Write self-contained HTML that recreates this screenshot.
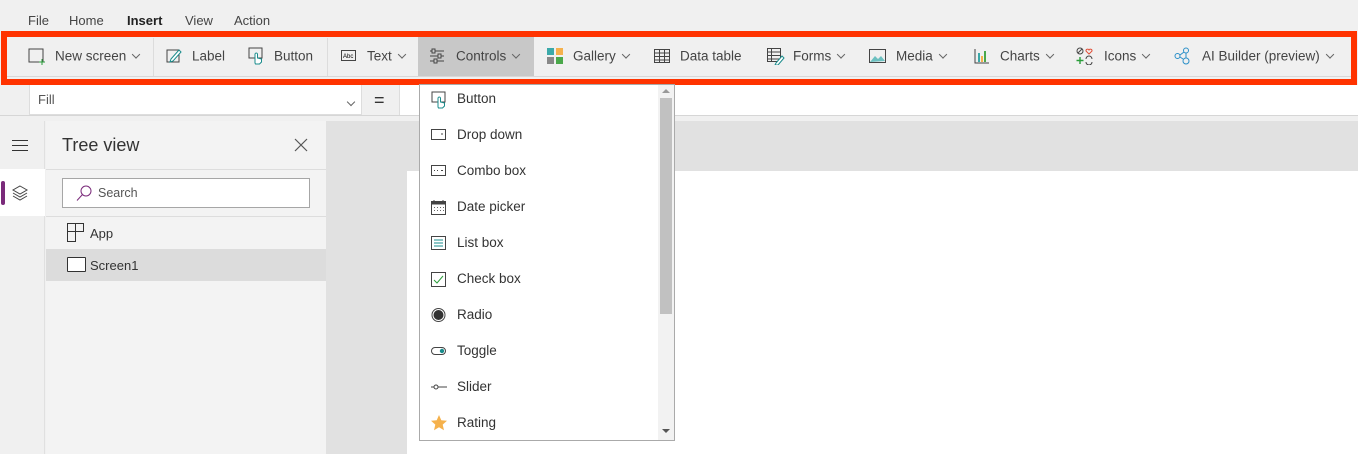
<!DOCTYPE html>
<html><head><style>
*{box-sizing:border-box;margin:0;padding:0}
body{width:1358px;height:454px;overflow:hidden;background:#f0f0f0;font-family:"Liberation Sans",sans-serif;color:#333;position:relative;font-size:13px}
.a{position:absolute}
.menu span{position:absolute;top:13px;font-size:13px;color:#444}
.tb{position:absolute;top:56px;transform:translateY(-50%);font-size:13.5px;color:#444;white-space:nowrap}
.chev{display:inline-block;width:6px;height:6px;border-right:1px solid #666;border-bottom:1px solid #666;transform:rotate(45deg);margin-left:7px;position:relative;top:-3px}
.it{position:absolute;left:11px;font-size:13.5px;color:#333;height:36px;line-height:36px;width:230px}
.it svg{position:absolute;left:0;top:10px}
.it span{position:absolute;left:26px}
</style></head><body>
<div class="menu"><span style="left:28px">File</span><span style="left:69px">Home</span><span style="left:127px;font-weight:bold;color:#222">Insert</span><span style="left:185px">View</span><span style="left:234px">Action</span></div>

<!-- red box -->
<div class="a" style="left:1px;top:31px;width:1356px;height:54px;border:6px solid #ff3300;background:#f0f0f0"></div>
<div class="a" style="left:7px;top:76px;width:1344px;height:1px;background:#d8d8d8"></div>
<div class="a" style="left:153px;top:38px;width:1px;height:38px;background:#dcdcdc"></div>
<div class="a" style="left:327px;top:38px;width:1px;height:38px;background:#dcdcdc"></div>
<div class="a" style="left:418px;top:37px;width:116px;height:39px;background:#c8c8c8"></div>

<svg class="a" style="left:28px;top:48px" width="18" height="18"><rect x="1" y="1" width="14" height="13" fill="none" stroke="#444"/><path d="M14 11v6M11 14h6" stroke="#2a9d3a"/></svg>
<div class="tb" style="left:55px">New screen<i class="chev"></i></div>
<svg class="a" style="left:166px;top:48px" width="16" height="16"><rect x="1" y="2" width="12" height="12" fill="none" stroke="#444"/><path d="M5 11l8-9 2 2-8 9-3 1z" fill="#fff" stroke="#1a8c8c"/></svg>
<div class="tb" style="left:192px">Label</div>
<svg class="a" style="left:248px;top:47px" width="18" height="18"><rect x="1" y="1" width="13" height="10" fill="none" stroke="#444"/><path d="M7 16v-9a1.3 1.3 0 0 1 2.5 0v4l4 1v3l-2 2h-4z" fill="#fff" stroke="#1a8c8c"/></svg>
<div class="tb" style="left:274px">Button</div>
<svg class="a" style="left:341px;top:50px" width="16" height="12"><rect x=".5" y=".5" width="14" height="10" fill="none" stroke="#444"/><text x="2" y="8" font-size="6" font-family="Liberation Sans">Abc</text></svg>
<div class="tb" style="left:367px">Text<i class="chev"></i></div>
<svg class="a" style="left:429px;top:48px" width="16" height="16"><path d="M1 3h14M1 8h14M1 13h14" stroke="#444"/><rect x="3" y="1" width="3" height="4" fill="#c8c8c8" stroke="#444"/><rect x="9" y="6" width="3" height="4" fill="#c8c8c8" stroke="#444"/><rect x="5" y="11" width="3" height="4" fill="#c8c8c8" stroke="#444"/></svg>
<div class="tb" style="left:456px">Controls<i class="chev"></i></div>
<svg class="a" style="left:547px;top:48px" width="17" height="17"><rect x="0" y="0" width="7" height="7" fill="#3aa9a9"/><rect x="9" y="0" width="7" height="7" fill="#f5b14c"/><rect x="0" y="9" width="7" height="7" fill="#888"/><rect x="9" y="9" width="7" height="7" fill="#4aa84a"/></svg>
<div class="tb" style="left:573px">Gallery<i class="chev"></i></div>
<svg class="a" style="left:654px;top:49px" width="17" height="15"><rect x=".5" y=".5" width="15" height="13" fill="none" stroke="#444"/><path d="M.5 4h15M.5 7.5h15M.5 11h15M5.5 .5v13M10.5 .5v13" stroke="#444"/></svg>
<div class="tb" style="left:680px">Data table</div>
<svg class="a" style="left:767px;top:48px" width="18" height="17"><rect x=".5" y=".5" width="13" height="13" fill="none" stroke="#444"/><path d="M.5 4h13M.5 7.5h13M.5 11h13M4.5 .5v13" stroke="#444"/><path d="M9 15l6-7 2 2-6 7-3 0z" fill="#fff" stroke="#1a8c8c"/></svg>
<div class="tb" style="left:793px">Forms<i class="chev"></i></div>
<svg class="a" style="left:869px;top:49px" width="18" height="15"><rect x=".5" y=".5" width="16" height="13" fill="none" stroke="#444"/><path d="M1 13l5-6 3 3 3-3 4 5z" fill="#6cc0c0"/></svg>
<div class="tb" style="left:896px">Media<i class="chev"></i></div>
<svg class="a" style="left:974px;top:48px" width="16" height="16"><path d="M1 1v14h14" stroke="#444" fill="none"/><rect x="4" y="5" width="2" height="9" fill="#3aa9a9"/><rect x="7" y="8" width="2" height="6" fill="#f5b14c"/><rect x="10" y="3" width="2" height="11" fill="#4aa84a"/></svg>
<div class="tb" style="left:1000px">Charts<i class="chev"></i></div>
<svg class="a" style="left:1076px;top:47px" width="18" height="18"><circle cx="4" cy="4" r="3" fill="none" stroke="#444"/><path d="M2 6l4-4" stroke="#444"/><path d="M13 7l-3-3a1.6 1.6 0 0 1 3-1 1.6 1.6 0 0 1 3 1z" fill="none" stroke="#e0503a"/><path d="M4 10v7M0.5 13.5h7" stroke="#2a9d3a" stroke-width="1.4"/><path d="M10 12a3 3 0 0 1 6 0M16 15a3 3 0 0 1-6 0" fill="none" stroke="#444"/></svg>
<div class="tb" style="left:1104px">Icons<i class="chev"></i></div>
<svg class="a" style="left:1174px;top:47px" width="18" height="18"><circle cx="3.5" cy="9" r="2.5" fill="none" stroke="#2a8fc8"/><circle cx="12" cy="3.5" r="2.5" fill="none" stroke="#2a8fc8"/><circle cx="12" cy="14" r="3" fill="none" stroke="#2a8fc8"/><path d="M6 8l4-3M6 10l3 2M12 6v5" stroke="#2a8fc8"/></svg>
<div class="tb" style="left:1202px">AI Builder (preview)<i class="chev"></i></div>

<!-- formula bar -->
<div class="a" style="left:0;top:85px;width:1358px;height:36px;background:#f0f0f0"></div>
<div class="a" style="left:29px;top:85px;width:333px;height:30px;background:#fff;border:1px solid #ddd;border-top:none"><span class="a" style="left:8px;top:7px;font-size:13px;color:#555">Fill</span><i class="chev a" style="left:318px;top:8px;margin:0"></i></div>
<div class="a" style="left:374px;top:90px;font-size:18px;color:#333">=</div>
<div class="a" style="left:399px;top:85px;width:959px;height:30px;background:#fff;border-left:1px solid #ddd"></div>
<div class="a" style="left:0;top:115px;width:1358px;height:1px;background:#d6d6d6"></div>

<!-- left rail -->
<div class="a" style="left:0;top:121px;width:45px;height:333px;background:#f0f0f0;border-right:1px solid #e0e0e0"></div>
<div class="a" style="left:12px;top:140px;width:16px;height:1px;background:#333;box-shadow:0 5px 0 #333,0 10px 0 #333"></div>
<div class="a" style="left:0;top:169px;width:45px;height:47px;background:#fff"></div>
<div class="a" style="left:1px;top:181px;width:4px;height:24px;background:#7a2a7a;border-radius:2px"></div>
<svg class="a" style="left:12px;top:185px" width="17" height="17"><path d="M8 1l7 4-7 4-7-4z M1 8l7 4 7-4 M1 11l7 4 7-4" fill="none" stroke="#444"/></svg>

<!-- tree panel -->
<div class="a" style="left:46px;top:121px;width:280px;height:333px;background:#f3f3f3"></div>
<div class="a" style="left:62px;top:135px;font-size:18px;color:#333">Tree view</div>
<svg class="a" style="left:294px;top:138px" width="14" height="14"><path d="M1 1l12 12M13 1L1 13" stroke="#555" stroke-width="1.2"/></svg>
<div class="a" style="left:46px;top:169px;width:280px;height:1px;background:#ddd"></div>
<div class="a" style="left:62px;top:178px;width:248px;height:30px;background:#fff;border:1px solid #a6a6a6"></div>
<svg class="a" style="left:75px;top:184px" width="18" height="18"><circle cx="11" cy="7" r="5" fill="none" stroke="#7a2a7a"/><path d="M7.5 10.5l-5.5 6" stroke="#7a2a7a"/></svg>
<div class="a" style="left:98px;top:186px;font-size:12.5px;color:#555">Search</div>
<div class="a" style="left:46px;top:216px;width:280px;height:1px;background:#ddd"></div>
<svg class="a" style="left:67px;top:223px" width="18" height="19"><path d="M.5 .5h16v8h-8v10h-8zM8.5 .5v8M.5 8.5h8" fill="none" stroke="#333"/></svg>
<div class="a" style="left:90px;top:226px;font-size:13px">App</div>
<div class="a" style="left:46px;top:249px;width:280px;height:32px;background:#dcdcdc"></div>
<div class="a" style="left:67px;top:257px;width:19px;height:15px;border:1px solid #333;background:#fff;border-radius:1px"></div>
<div class="a" style="left:90px;top:258px;font-size:13px">Screen1</div>

<!-- canvas -->
<div class="a" style="left:326px;top:121px;width:1032px;height:333px;background:#e1e1e1"></div>
<div class="a" style="left:407px;top:171px;width:951px;height:283px;background:#fff"></div>

<!-- dropdown -->
<div class="a" style="left:419px;top:84px;width:256px;height:357px;background:#fff;border:1px solid #aaa">
<div class="a" style="left:238px;top:0;width:16px;height:355px;background:#f2f2f2"></div>
<div class="a" style="left:240px;top:13px;width:12px;height:216px;background:#c1c1c1"></div>
<div class="a" style="left:242px;top:4px;border:4px solid transparent;border-bottom:4px solid #999;border-top:none;width:0"></div>
<div class="a" style="left:242px;top:344px;border:4px solid transparent;border-top:4px solid #555;border-bottom:none;width:0"></div>
<div class="it" style="top:-4px"><svg width="18" height="18"><rect x="1" y="1" width="13" height="10" fill="none" stroke="#444"/><path d="M7 16v-9a1.3 1.3 0 0 1 2.5 0v4l4 1v3l-2 2h-4z" fill="#fff" stroke="#1a8c8c"/></svg><span>Button</span></div>
<div class="it" style="top:32px"><svg width="16" height="16"><rect x=".5" y="2.5" width="14" height="10" fill="none" stroke="#444"/><path d="M10 7h2" stroke="#444"/></svg><span>Drop down</span></div>
<div class="it" style="top:68px"><svg width="16" height="16"><rect x=".5" y="2.5" width="14" height="10" fill="none" stroke="#444"/><path d="M3 7.5h1M6 7.5h1M10 7.5h2" stroke="#444"/></svg><span>Combo box</span></div>
<div class="it" style="top:104px"><svg width="16" height="17"><rect x=".5" y="2.5" width="14" height="13" fill="none" stroke="#444"/><rect x=".5" y="2.5" width="14" height="3" fill="#444"/><path d="M3 1v3M12 1v3" stroke="#444"/><g fill="#666"><rect x="3" y="8" width="1" height="1"/><rect x="6" y="8" width="1" height="1"/><rect x="9" y="8" width="1" height="1"/><rect x="12" y="8" width="1" height="1"/><rect x="3" y="11" width="1" height="1"/><rect x="6" y="11" width="1" height="1"/><rect x="9" y="11" width="1" height="1"/><rect x="12" y="11" width="1" height="1"/></g></svg><span>Date picker</span></div>
<div class="it" style="top:140px"><svg width="16" height="16"><rect x=".5" y="1.5" width="14" height="13" fill="none" stroke="#444"/><path d="M3 5h9M3 8h9M3 11h9" stroke="#1a8c8c"/></svg><span>List box</span></div>
<div class="it" style="top:176px"><svg width="16" height="16"><rect x=".5" y="1.5" width="14" height="14" fill="none" stroke="#444"/><path d="M3 9l3 3 6-7" fill="none" stroke="#2a9d3a"/></svg><span>Check box</span></div>
<div class="it" style="top:212px"><svg width="16" height="16"><circle cx="7.5" cy="8" r="6.5" fill="none" stroke="#444"/><circle cx="7.5" cy="8" r="5" fill="#333"/></svg><span>Radio</span></div>
<div class="it" style="top:248px"><svg width="16" height="16"><rect x=".5" y="4.5" width="14" height="7" rx="3.5" fill="none" stroke="#444"/><circle cx="11" cy="8" r="2.2" fill="#1a8c8c"/></svg><span>Toggle</span></div>
<div class="it" style="top:284px"><svg width="16" height="16"><path d="M0 8h3M7 8h9" stroke="#444"/><circle cx="5" cy="8" r="2" fill="none" stroke="#444"/></svg><span>Slider</span></div>
<div class="it" style="top:320px"><svg width="16" height="16"><path d="M8 0l2.3 5.3 5.7.5-4.3 3.8 1.3 5.6L8 12.3 3 15.2l1.3-5.6L0 5.8l5.7-.5z" fill="#f5b14c"/></svg><span>Rating</span></div>
</div>
</body></html>
